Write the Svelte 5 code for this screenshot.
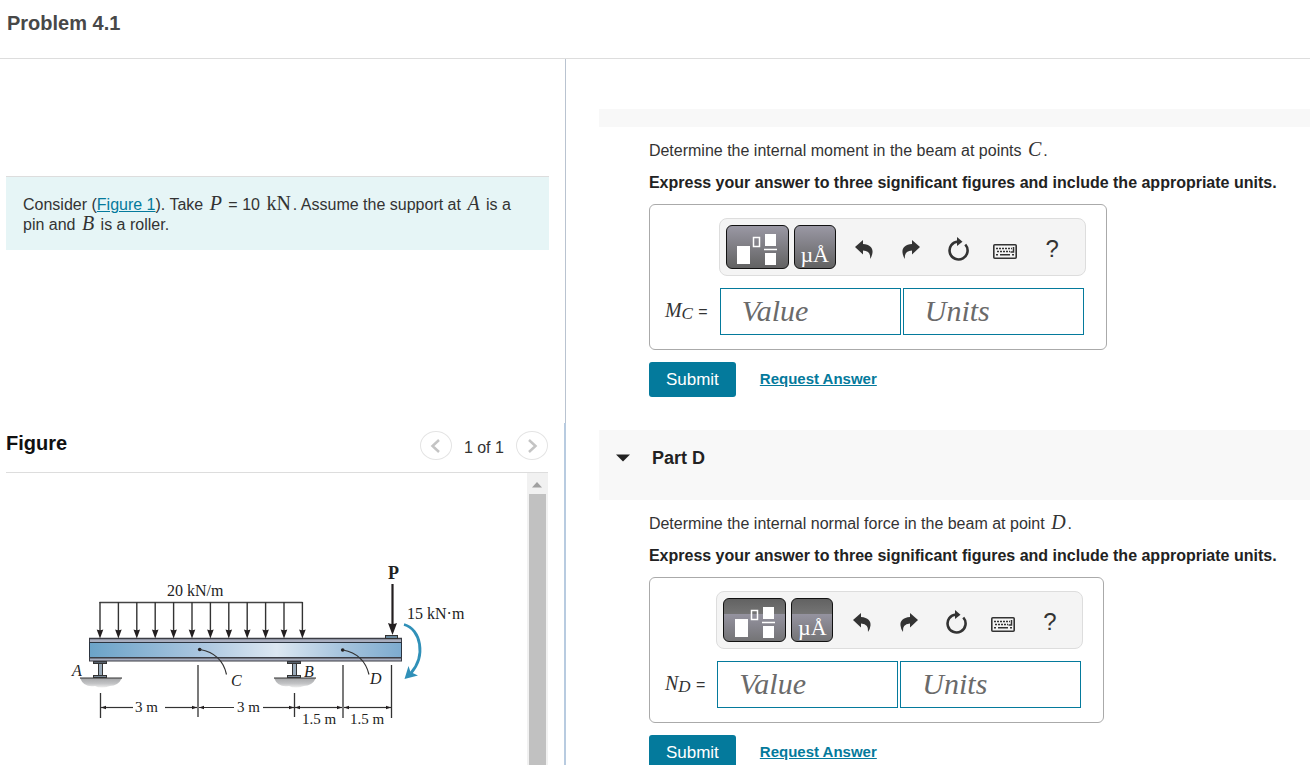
<script>
	let parts = $state([
		{
			id: 'c',
			title: '',
			prompt: 'Determine the internal moment in the beam at points',
			point: 'C',
			symbol: 'M',
			sub: 'C',
			value: '',
			units: ''
		},
		{
			id: 'd',
			title: 'Part D',
			prompt: 'Determine the internal normal force in the beam at point',
			point: 'D',
			symbol: 'N',
			sub: 'D',
			value: '',
			units: ''
		}
	]);

	// distributed load, 12 arrows from A to B
	const loads = Array.from({ length: 12 }, (_, i) => 40 + i * 18.4);

	// dimension lines, the head is on the "to" end
	const dims = [
		{ from: 73, to: 41 },
		{ from: 105, to: 137 },
		{ from: 174, to: 139 },
		{ from: 203, to: 234 },
		{ from: 258, to: 235 },
		{ from: 258, to: 282 },
		{ from: 306, to: 284 },
		{ from: 306, to: 331 }
	];

	const supports = [40, 234];

	function reset(part) {
		part.value = '';
		part.units = '';
	}
</script>

<div class="page">
	<header>
		<h1>Problem 4.1</h1>
	</header>

	<div class="columns">
		<div class="left">
			<section class="problem">
				<p class="intro">
					Consider (<a href="#figure">Figure 1</a>). Take <i class="math">P</i> = 10 <span class="math">kN</span>. Assume the support at <i class="math">A</i> is a pin and <i class="math">B</i> is a roller.
				</p>
			</section>

			<section class="figure" id="figure">
				<div class="figure-head">
					<h2>Figure</h2>
					<nav>
						<button class="round" aria-label="Previous figure">
							<svg width="12" height="14" viewBox="0 0 12 14"><path d="M9 1L2.5 7L9 13" /></svg>
						</button>
						<span>1 of 1</span>
						<button class="round" aria-label="Next figure">
							<svg width="12" height="14" viewBox="0 0 12 14"><path d="M3 1l6.5 6L3 13" /></svg>
						</button>
					</nav>
				</div>
				<div class="viewer">
					<div class="canvas">
						<svg class="beam" width="420" height="190" viewBox="0 0 420 190">
							<defs>
								<linearGradient id="steel">
									<stop offset="0" stop-color="#6ba3c8" />
									<stop offset="0.35" stop-color="#a9c5df" />
									<stop offset="0.6" stop-color="#dce7f2" />
									<stop offset="0.8" stop-color="#a8c5de" />
									<stop offset="1" stop-color="#7dabcf" />
								</linearGradient>
								<linearGradient id="ground" x2="0" y2="1">
									<stop offset="0" stop-color="#a5a6a8" />
									<stop offset="0.6" stop-color="#c3c4c6" />
									<stop offset="1" stop-color="#eee" />
								</linearGradient>
							</defs>

							<!-- supports -->
							{#each supports as x}
								<path d="M{x - 20} 128h42q-4 8-12 8q-9 3-15 0q-11 2-15-8z" fill="url(#ground)" />
								<path d="M{x - 20} 128h42" stroke="#333" />
								<rect x={x - 1.5} y="113" width="4" height="13" fill="#9aabba" stroke="#333" />
								<rect x={x - 6.5} y="111.5" width="13" height="2" fill="#55606c" stroke="#333" />
								<rect x={x - 6.5} y="125.5" width="13" height="2" fill="#7d8b99" stroke="#333" />
							{/each}

							<!-- beam -->
							<rect x="29.5" y="88.5" width="312" height="22.5" fill="#a9aebf" stroke="#3b3d45" />
							<rect x="29.5" y="92.5" width="312" height="15" fill="url(#steel)" stroke="#2b3440" />
							<path d="M29 88.5h313M29 107.7h313" stroke="#3b3d45" stroke-width="1.5" />

							<!-- loads -->
							<path d="M39.5 52.5h203" stroke="#444" stroke-width="1.5" />
							{#each loads as x}
								<path d="M{x} 52v30" stroke="#333" stroke-width="1.4" />
								<path d="M{x - 3.3} 79.5q3.3 1.5 6.6 0l-3.3 9z" fill="#231f20" />
							{/each}
							<rect x="325.5" y="85.5" width="12" height="3" fill="#6c8ba0" stroke="#333" />
							<path d="M332.5 34v42" stroke="#231f20" stroke-width="2.2" />
							<path d="M328 73q4.5 2 9 0l-4.5 12z" fill="#231f20" />

							<!-- couple -->
							<path d="M344 74.5C361 79 366 106 351 123" fill="none" stroke="#3090b8" stroke-width="2.8" />
							<path d="M344.5 129l4-13 2 6 7.5 3.5z" fill="#3090b8" />

							<!-- leaders -->
							<circle cx="139.7" cy="99.5" r="1.8" fill="#231f20" />
							<path d="M140 99.5q22 4 26.5 25" fill="none" stroke="#333" stroke-width="1.2" />
							<circle cx="282.7" cy="100" r="1.8" fill="#231f20" />
							<path d="M283 100q21 4 26 24.5" fill="none" stroke="#333" stroke-width="1.2" />

							<!-- dimensions -->
							<path d="M40.5 143v25M138 115v52M234.5 143v24M283 115v53M331.5 115v53" stroke="#333" stroke-width="1.3" />
							{#each dims as d}
								{@const s = d.to > d.from ? -1 : 1}
								<path d="M{d.from} 157.5H{d.to}" stroke="#333" stroke-width="1.2" />
								<path d="M{d.to} 157.5l{5 * s}-1.8v3.6z" fill="#231f20" />
							{/each}

							<g class="lbl">
								<text x="107" y="46">20 kN/m</text>
								<text x="347" y="69">15 kN·m</text>
								<text x="328" y="29" class="force">P</text>
								<text x="12" y="126" class="it">A</text>
								<text x="171" y="136" class="it">C</text>
								<text x="244" y="127" class="it">B</text>
								<text x="310" y="134" class="it">D</text>
								<text x="75" y="162" class="dim">3 m</text>
								<text x="177" y="162" class="dim">3 m</text>
								<text x="242" y="174" class="dim">1.5 m</text>
								<text x="290" y="174" class="dim">1.5 m</text>
							</g>
						</svg>
					</div>
					<div class="scroll">
						<svg width="10" height="6" viewBox="0 0 10 6"><path d="M0 5.5L5 0l5 5.5z" fill="#a0a0a0" /></svg>
						<div class="thumb"></div>
					</div>
				</div>
			</section>
		</div>

		<main>
			{#each parts as part (part.id)}
				<section class="part">
					<div class="part-head" class:titled={part.title}>
						{#if part.title}
							<svg width="14" height="8" viewBox="0 0 14 8"><path d="M0 .5h14L7 7.5z" fill="#222" /></svg>
							<h3>{part.title}</h3>
						{/if}
					</div>
					<div class="part-body">
						<p>{part.prompt} <i class="math">{part.point}</i>.</p>
						<p class="note">Express your answer to three significant figures and include the appropriate units.</p>

						<div class="answer">
							<div class="toolbar">
								<button class="tool wide" class:alt={part.id === 'd'} aria-label="Templates">
									<svg width="40" height="34" viewBox="0 0 40 34">
										<path d="M0 14h13v18H0zM28 2h11v12H28zM28 21h11v12H28z" fill="#fff" />
										<path d="M27 17.5h13" stroke="#fff" stroke-width="1.5" />
										<rect x="16.5" y="5.5" width="6" height="9" fill="none" stroke="#fff" stroke-width="1.5" />
									</svg>
								</button>
								<button class="tool" class:alt={part.id === 'd'} aria-label="Symbols">µÅ</button>
								<button class="icon" aria-label="Undo">
									<svg width="18" height="19" viewBox="0 0 18 19"><path d="M0 7L8 0v4c7 .5 10 4 9.5 8.5Q17.2 16 15 19q1.2-8-7-8.5v4z" /></svg>
								</button>
								<button class="icon" aria-label="Redo">
									<svg width="18" height="19" viewBox="0 0 18 19"><path d="M18 7L10 0v4C3 4.5 0 8 .5 12.5Q.8 16 3 19q-1.2-8 7-8.5v4z" /></svg>
								</button>
								<button class="icon" aria-label="Reset" onclick={() => reset(part)}>
									<svg width="22" height="24" viewBox="0 0 22 24">
										<path d="M18.3 7.5A9 9 0 1 1 11 4.5" fill="none" stroke="#333" stroke-width="2.6" />
										<path d="M10 0l5.5 4.8L10 9z" />
									</svg>
								</button>
								<button class="icon" aria-label="Keyboard shortcuts">
									<svg width="24" height="19" viewBox="0 0 24 19">
										<rect x="0.8" y="4.8" width="22.4" height="13.4" rx="1" fill="none" stroke="#333" stroke-width="1.6" />
										<path d="M3 8.5h16M4 11.5h13M3 14.8h2M19 14.8h2" fill="none" stroke="#333" stroke-width="1.5" stroke-dasharray="2 1" />
										<path d="M7 14.8h10M20.5 7v5h-3" fill="none" stroke="#333" stroke-width="1.5" />
									</svg>
								</button>
								<button class="icon help" aria-label="Help">?</button>
							</div>
							<label for="value-{part.id}"><i>{part.symbol}<small>{part.sub}</small></i> =</label>
							<div class="fields">
								<input id="value-{part.id}" placeholder="Value" bind:value={part.value} />
								<input aria-label="Units" placeholder="Units" bind:value={part.units} />
							</div>
						</div>

						<div class="actions">
							<button class="submit">Submit</button>
							<a href="#answer">Request Answer</a>
						</div>
					</div>
				</section>
			{/each}
		</main>
	</div>
</div>

<style>
	.page {
		display: flex;
		flex-direction: column;
		height: 100vh;
		overflow: hidden;
		background: #fff;
		color: #333;
		font-family: "Liberation Sans", Arial, sans-serif;
		font-size: 16px;
		line-height: 20px;
	}

	h1, h2, h3, p {
		margin: 0;
	}

	button {
		padding: 0;
		font-family: inherit;
		cursor: pointer;
	}

	header {
		padding: 11px 7px 23px;
		border-bottom: 1px solid #ddd;
	}

	h1 {
		font-size: 20px;
		line-height: 24px;
		color: #484848;
	}

	a {
		color: #047a9c;
	}

	.math {
		margin: 0 2px;
		font-family: "Liberation Serif", "Times New Roman", serif;
		font-size: 20px;
		line-height: 16px;
	}

	.columns {
		flex: 1;
		min-height: 0;
		display: grid;
		grid-template-columns: 43.2% 1fr;
	}

	.left {
		display: flex;
		flex-direction: column;
		min-height: 0;
	}

	.problem {
		flex: 0 0 247px;
		padding: 117px 16px 0 6px;
		border-right: 1px solid #b9c3d0;
	}

	.intro {
		padding: 18px 32px 15px 17px;
		border-top: 1px solid #ddd;
		background: #e6f5f6;
	}

	.figure {
		flex: 1;
		min-height: 0;
		display: flex;
		flex-direction: column;
		padding: 0 16px 0 6px;
		border-right: 2px solid #b8cbe0;
	}

	.figure-head {
		display: flex;
		justify-content: space-between;
		align-items: flex-start;
		padding: 8px 0 12px;
		border-bottom: 1px solid #ddd;
	}

	h2 {
		font-size: 20px;
		line-height: 24px;
		color: #111;
	}

	nav {
		display: flex;
		align-items: center;
		gap: 12px;
	}

	nav span {
		padding-top: 4px;
	}

	.round {
		display: flex;
		align-items: center;
		justify-content: center;
		width: 32px;
		height: 29px;
		border: 1px solid #e4e4e4;
		border-radius: 50%;
		background: #fff;
	}

	.round path {
		fill: none;
		stroke: #c4c4c4;
		stroke-width: 2.5;
	}

	.viewer {
		flex: 1;
		min-height: 0;
		display: flex;
	}

	.canvas {
		flex: 1;
		min-width: 0;
		padding: 77px 0 0 54px;
		overflow: hidden;
	}

	.beam {
		display: block;
	}

	.lbl {
		font-family: "Liberation Serif", "Times New Roman", serif;
		font-size: 16px;
		fill: #222;
	}

	.it {
		font-style: italic;
	}

	.dim {
		font-size: 15px;
	}

	.force {
		font-size: 18px;
		font-weight: bold;
	}

	.scroll {
		display: flex;
		flex-direction: column;
		align-items: center;
		gap: 6px;
		width: 21px;
		padding-top: 9px;
		box-sizing: border-box;
		background: #f1f1f1;
	}

	.scroll svg {
		flex: none;
	}

	.thumb {
		flex: 1;
		width: 17px;
		background: #c1c1c1;
	}

	main {
		min-height: 0;
		padding: 50px 0 0 33px;
		overflow-y: auto;
		scrollbar-width: none;
	}

	.part-head {
		min-height: 18px;
		background: #f8f8f8;
	}

	.titled {
		display: flex;
		align-items: center;
		gap: 22px;
		padding: 18px 17px 32px;
		line-height: 20px;
	}

	h3 {
		font-size: 18px;
		color: #222;
	}

	.part-body {
		padding: 14px 16px 33px 50px;
	}

	.note {
		margin: 12px 0 11px;
		font-weight: bold;
		color: #222;
	}

	.answer {
		display: inline-grid;
		grid-template-columns: auto auto;
		row-gap: 12px;
		padding: 13px 20px 14px 15px;
		border: 1px solid #aaa;
		border-radius: 6px;
		vertical-align: top;
	}

	.toolbar {
		grid-column: 2;
		display: flex;
		align-items: center;
		padding: 6px 9px 6px 6px;
		border: 1px solid #ddd;
		border-radius: 8px;
		background: #f4f4f4;
	}

	.tool {
		display: flex;
		align-items: center;
		justify-content: center;
		box-sizing: border-box;
		width: 42px;
		height: 44px;
		margin-right: 5px;
		padding-top: 16px;
		border: 1px solid #111;
		border-radius: 6px;
		background: linear-gradient(#9a98a4, #626262);
		color: #fff;
		font-family: "Liberation Serif", serif;
		font-size: 22px;
		line-height: 24px;
	}

	.wide {
		width: 63px;
		padding-top: 3px;
	}

	.alt {
		background: linear-gradient(#626262, #747474 35%, #9593a0 35%, #747476);
	}

	.icon {
		display: flex;
		align-items: center;
		justify-content: center;
		box-sizing: border-box;
		width: 47px;
		height: 44px;
		padding-top: 4px;
		border: 0;
		background: none;
		color: #333;
		fill: #333;
	}

	.help {
		font-size: 24px;
	}

	label {
		align-self: center;
		padding-right: 11px;
	}

	label i {
		padding-right: 1px;
		font-family: "Liberation Serif", "Times New Roman", serif;
		font-size: 20px;
	}

	small {
		font-size: 17px;
		vertical-align: -2px;
	}

	.fields {
		display: flex;
		gap: 2px;
		padding: 0 1px;
	}

	input {
		box-sizing: border-box;
		width: 181px;
		height: 47px;
		padding: 0 20px 2px 21px;
		border: 1px solid #047a9c;
		border-radius: 0;
		font: italic 30px "Liberation Serif", "Times New Roman", serif;
		color: #333;
	}

	input::placeholder {
		color: #6a6a6a;
		opacity: 1;
	}

	.actions {
		display: flex;
		align-items: center;
		gap: 24px;
		margin-top: 12px;
	}

	.submit {
		padding: 0 17px;
		height: 35px;
		border: 0;
		border-radius: 3px;
		background: #047a9c;
		color: #fff;
		font-size: 17px;
	}

	.actions a {
		padding-bottom: 2px;
		font-size: 15px;
		font-weight: bold;
	}
</style>
